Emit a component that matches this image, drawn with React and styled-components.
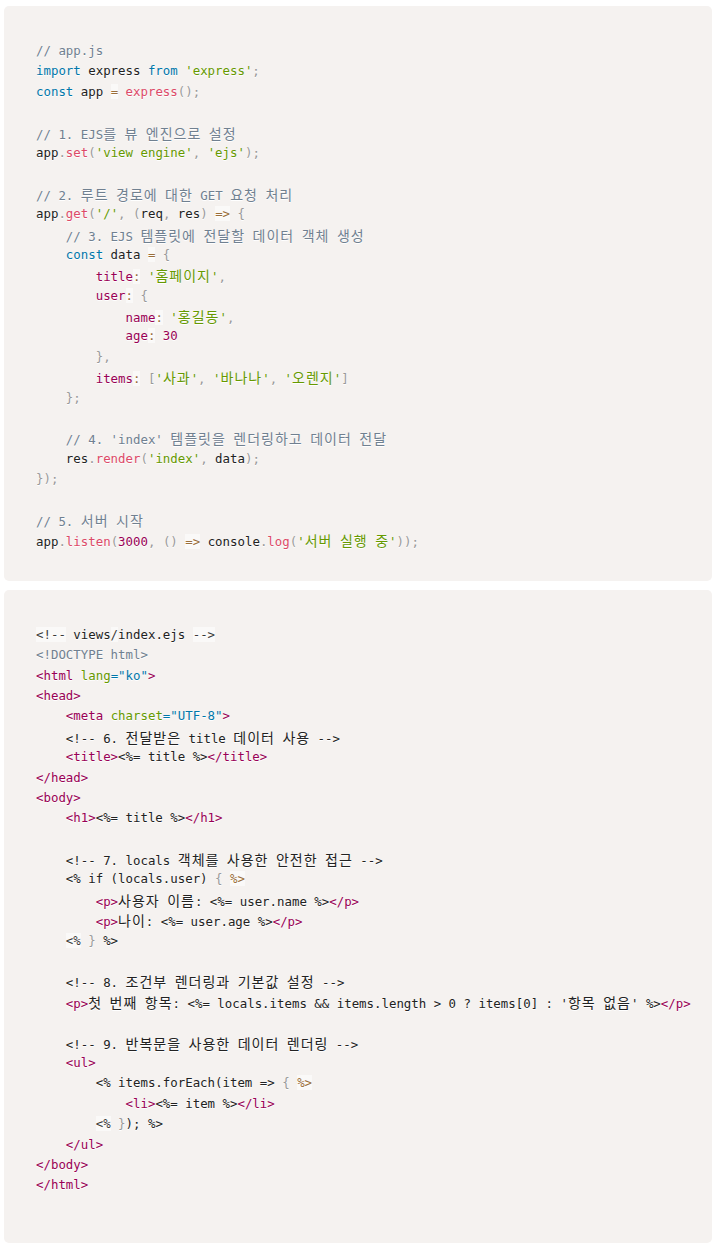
import styled, { createGlobalStyle, css } from 'styled-components';

const GlobalStyle = createGlobalStyle`
  body {
    margin: 0;
    background: #ffffff;
  }
`;

// «x|text» marks a token; x picks the colour, plain text stays default
const jsCode = [
  '«c|// app.js»',
  "«k|import» express «k|from» «s|'express'»«p|;»",
  '«k|const» app «o|=» «f|express»«p|(»«p|)»«p|;»',
  '',
  '«c|// 1. EJS를 뷰 엔진으로 설정»',
  "app«p|.»«f|set»«p|(»«s|'view engine'»«p|,» «s|'ejs'»«p|)»«p|;»",
  '',
  '«c|// 2. 루트 경로에 대한 GET 요청 처리»',
  "app«p|.»«f|get»«p|(»«s|'/'»«p|,» «p|(»req«p|,» res«p|)» «o|=>» «p|{»",
  '    «c|// 3. EJS 템플릿에 전달할 데이터 객체 생성»',
  '    «k|const» data «o|=» «p|{»',
  "        «t|title»«o|:» «s|'홈페이지'»«p|,»",
  '        «t|user»«o|:» «p|{»',
  "            «t|name»«o|:» «s|'홍길동'»«p|,»",
  '            «t|age»«o|:» «t|30»',
  '        «p|}»«p|,»',
  "        «t|items»«o|:» «p|[»«s|'사과'»«p|,» «s|'바나나'»«p|,» «s|'오렌지'»«p|]»",
  '    «p|}»«p|;»',
  '',
  "    «c|// 4. 'index' 템플릿을 렌더링하고 데이터 전달»",
  "    res«p|.»«f|render»«p|(»«s|'index'»«p|,» data«p|)»«p|;»",
  '«p|}»«p|)»«p|;»',
  '',
  '«c|// 5. 서버 시작»',
  "app«p|.»«f|listen»«p|(»«t|3000»«p|,» «p|(»«p|)» «o|=>» console«p|.»«f|log»«p|(»«s|'서버 실행 중'»«p|)»«p|)»«p|;»",
];

const ejsCode = [
  '«h|<!--» views«h|/»index.ejs «h|-->»',
  '«c|<!DOCTYPE html>»',
  '«t|<html» «s|lang»«k|="ko"»«t|>»',
  '«t|<head>»',
  '    «t|<meta» «s|charset»«k|="UTF-8"»«t|>»',
  '    <!-- 6. 전달받은 title 데이터 사용 -->',
  '    «t|<title>»<%= title %>«t|</title>»',
  '«t|</head>»',
  '«t|<body>»',
  '    «t|<h1>»<%= title %>«t|</h1>»',
  '',
  '    <!-- 7. locals 객체를 사용한 안전한 접근 -->',
  '    <% if (locals.user) «p|{» «o|%>»',
  '        «t|<p>»사용자 이름: <%= user.name %>«t|</p>»',
  '        «t|<p>»나이: <%= user.age %>«t|</p>»',
  '    «h|<%» «p|}» %>',
  '',
  '    <!-- 8. 조건부 렌더링과 기본값 설정 -->',
  "    «t|<p>»첫 번째 항목: <%= locals.items && items.length > 0 ? items[0] : '항목 없음' %>«t|</p>»",
  '',
  '    <!-- 9. 반복문을 사용한 데이터 렌더링 -->',
  '    «t|<ul>»',
  '        <% items.forEach(item => «p|{» «o|%>»',
  '            «t|<li>»<%= item %>«t|</li>»',
  '        «h|<%» «p|}»); %>',
  '    «t|</ul>»',
  '«t|</body>»',
  '«t|</html>»',
  '',
];

const tokenColors = {
  c: '#708090',
  p: '#999999',
  t: '#990055',
  s: '#669900',
  k: '#0077aa',
  f: '#dd4a68',
  o: '#9a6e3a',
  h: '#3a3a3a',
};

const highlighted = ['o', 'h'];

function parseLine(line) {
  const parts = [];
  const re = /«(\w)\|([^»]*)»/g;
  let last = 0;
  let m;
  while ((m = re.exec(line))) {
    if (m.index > last) parts.push({ type: null, text: line.slice(last, m.index) });
    parts.push({ type: m[1], text: m[2] });
    last = re.lastIndex;
  }
  if (last < line.length) parts.push({ type: null, text: line.slice(last) });
  return parts;
}

// Hangul runs get their own font so they keep the wide look of the original
function withHangul(text) {
  return text.split(/([\uAC00-\uD7A3\u3131-\u318E]+)/).map((chunk, i) =>
    i % 2 === 1 ? <Ko key={i}>{chunk}</Ko> : chunk
  );
}

function CodeBlock({ lines, $bottom }) {
  return (
    <Pre $bottom={$bottom}>
      {lines.map((line, i) => (
        <Line key={i}>
          {line === ''
            ? ' '
            : parseLine(line).map((part, j) =>
                part.type ? (
                  <Tok key={j} $t={part.type}>
                    {withHangul(part.text)}
                  </Tok>
                ) : (
                  <span key={j}>{withHangul(part.text)}</span>
                )
              )}
        </Line>
      ))}
    </Pre>
  );
}

export default function App() {
  return (
    <>
      <GlobalStyle />
      <Page>
        <CodeBlock lines={jsCode} $bottom={30} />
        <CodeBlock lines={ejsCode} $bottom={27} />
      </Page>
    </>
  );
}

const Page = styled.div`
  display: flex;
  flex-direction: column;
  gap: 9px;
  padding: 6px 8px 6px 4px;
`;

const Pre = styled.pre`
  margin: 0;
  padding: 35px 32px ${(p) => p.$bottom}px;
  background: #f5f2f0;
  border-radius: 5px;
  overflow: hidden;
  font-family: 'DejaVu Sans Mono', monospace;
  font-size: 12.4px;
  line-height: 20.4px;
  color: #222222;
  text-shadow: 0 1px #ffffff;
  white-space: pre;
`;

const Line = styled.div`
  height: 20.4px;
`;

const Tok = styled.span`
  color: ${(p) => tokenColors[p.$t]};
  ${(p) =>
    highlighted.includes(p.$t) &&
    css`
      background: hsla(0, 0%, 100%, 0.5);
    `}
`;

const Ko = styled.span`
  font-family: 'Noto Sans CJK KR', sans-serif;
  font-size: 14px;
  letter-spacing: 1px;
`;
